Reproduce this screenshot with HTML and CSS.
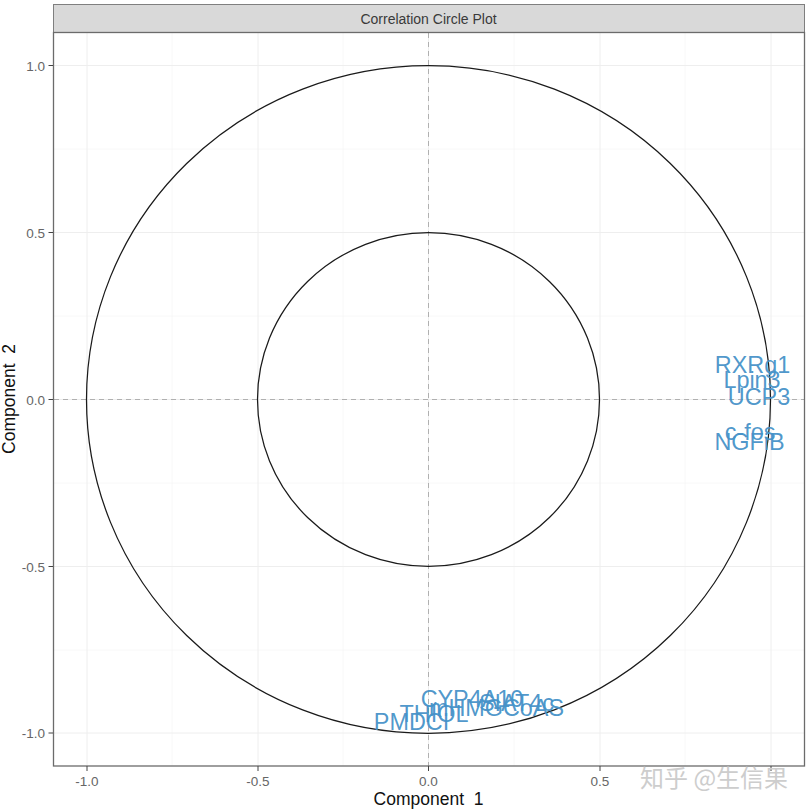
FILE: index.html
```html
<!DOCTYPE html>
<html lang="zh">
<head>
<meta charset="utf-8">
<title>Correlation Circle Plot</title>
<link rel="stylesheet" href="styles.css">
</head>
<body>
<svg class="plot" width="808" height="812" viewBox="0 0 808 812" xmlns="http://www.w3.org/2000/svg">
  <rect class="strip" x="53.5" y="4.5" width="751" height="28"/>
  <text class="strip-text" x="428.5" y="24">Correlation Circle Plot</text>

  <g class="grid-minor">
    <path d="M172 33V766M343 33V766M514 33V766M685 33V766"/>
    <path d="M54 149H804M54 316H804M54 483H804M54 650H804"/>
  </g>
  <g class="grid-major">
    <path d="M87 33V766M258 33V766M428.5 33V766M600 33V766M771 33V766"/>
    <path d="M54 65.5H804M54 232.5H804M54 399.5H804M54 566.5H804M54 733H804"/>
  </g>

  <path class="dash" d="M428.5 33V766M54 399.5H804"/>
  <ellipse class="circle" cx="428.5" cy="399.5" rx="342" ry="333.8"/>
  <ellipse class="circle" cx="428.5" cy="399.5" rx="171" ry="166.9"/>

  <g class="labels">
    <text x="752.5" y="373">RXRg1</text>
    <text x="752" y="388">Lpin3</text>
    <text x="759" y="405">UCP3</text>
    <text x="750" y="440">c-fos</text>
    <text x="749.5" y="450">NGFiB</text>
    <text x="472" y="707">CYP4A10</text>
    <text x="516.5" y="711">SIAT4c</text>
    <text x="434" y="722">THIOL</text>
    <text x="496.5" y="716">mHMGCoAS</text>
    <text x="411.5" y="730">PMDCI</text>
  </g>

  <rect class="panel" x="53.5" y="32.5" width="751" height="733.5"/>

  <path class="tick" d="M48.5 65.5H53M48.5 232.5H53M48.5 399.5H53M48.5 566.5H53M48.5 733H53"/>
  <path class="tick" d="M87 766V771M258 766V771M428.5 766V771M600 766V771M771 766V771"/>

  <g class="axis-y">
    <text x="45" y="70.5">1.0</text>
    <text x="45" y="237.5">0.5</text>
    <text x="45" y="404.5">0.0</text>
    <text x="45" y="571.5">-0.5</text>
    <text x="45" y="738">-1.0</text>
  </g>
  <g class="axis-x">
    <text x="87" y="786">-1.0</text>
    <text x="258" y="786">-0.5</text>
    <text x="428.5" y="786">0.0</text>
    <text x="600" y="786">0.5</text>
  </g>

  <text class="axis-title" x="428.5" y="805" xml:space="preserve">Component  1</text>
  <text class="axis-title" transform="translate(15 399) rotate(-90)" xml:space="preserve">Component  2</text>

  <text class="watermark" x="640" y="787">知乎 @生信果</text>
</svg>
</body>
</html>
```
FILE: styles.css
```css
html, body {
  margin: 0;
  padding: 0;
  background: #fff;
}
.plot {
  display: block;
  font-family: "Liberation Sans", Arial, sans-serif;
}
.strip {
  fill: #d9d9d9;
  stroke: #7f7f7f;
  stroke-width: 1;
}
.strip-text {
  font-size: 14px;
  fill: #3a3a3a;
  text-anchor: middle;
}
.grid-minor path {
  fill: none;
  stroke: #f6f6f6;
  stroke-width: 0.8;
}
.grid-major path {
  fill: none;
  stroke: #eeeeee;
  stroke-width: 1;
}
.dash {
  fill: none;
  stroke: #b0b0b0;
  stroke-width: 1;
  stroke-dasharray: 5 4;
}
.circle {
  fill: none;
  stroke: #1a1a1a;
  stroke-width: 1.25;
}
.labels text {
  font-size: 23.4px;
  fill: #4692c8;
  fill-opacity: 0.95;
  text-anchor: middle;
}
.panel {
  fill: none;
  stroke: #6b6b6b;
  stroke-width: 1.3;
}
.tick {
  fill: none;
  stroke: #444;
  stroke-width: 1;
}
.axis-y text {
  font-size: 13.5px;
  fill: #666;
  text-anchor: end;
}
.axis-x text {
  font-size: 13.5px;
  fill: #666;
  text-anchor: middle;
}
.axis-title {
  font-size: 17.5px;
  fill: #111;
  text-anchor: middle;
  white-space: pre;
}
.watermark {
  font-family: "Noto Sans CJK SC", "Liberation Sans", sans-serif;
  font-size: 24px;
  fill: #cdcdcd;
}
```
